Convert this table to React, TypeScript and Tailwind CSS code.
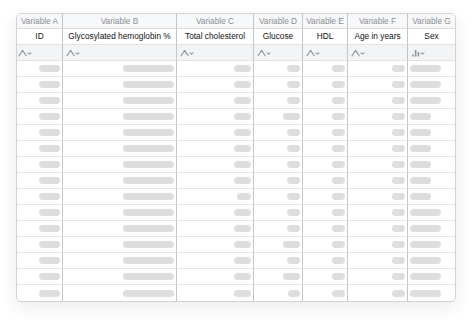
import React from "react";

type Col = {
  variable: string;
  name: string;
  chart: "dist" | "bars";
  align: "end" | "start";
  widths: number[];
};

const ROWS = 15;

const fill = (w: number) => Array.from({ length: ROWS }, () => w);

const COLUMNS: Col[] = [
  { variable: "Variable A", name: "ID", chart: "dist", align: "end", widths: fill(21) },
  { variable: "Variable B", name: "Glycosylated hemoglobin %", chart: "dist", align: "end", widths: fill(51) },
  {
    variable: "Variable C",
    name: "Total cholesterol",
    chart: "dist",
    align: "end",
    widths: fill(17).map((w, i) => (i === 8 ? 14 : w)),
  },
  {
    variable: "Variable D",
    name: "Glucose",
    chart: "dist",
    align: "end",
    widths: fill(13).map((w, i) => (i === 3 || i === 11 || i === 13 ? 17 : i === 14 ? 12 : w)),
  },
  { variable: "Variable E", name: "HDL", chart: "dist", align: "end", widths: fill(13) },
  { variable: "Variable F", name: "Age in years", chart: "dist", align: "end", widths: fill(13) },
  {
    variable: "Variable G",
    name: "Sex",
    chart: "bars",
    align: "start",
    widths: fill(31).map((w, i) => (i >= 3 && i <= 8 ? 21 : w)),
  },
];

const DistIcon = () => (
  <svg width="14" height="8" viewBox="0 0 14 8" fill="none" stroke="#8f959b" strokeWidth="1.1" strokeLinecap="round" strokeLinejoin="round">
    <path d="M1 6.8 L4.6 1.4 L8.2 6.8" />
    <path d="M10 3.8 L11.5 5.2 L13 3.8" />
  </svg>
);

const BarsIcon = () => (
  <svg width="14" height="8" viewBox="0 0 14 8" fill="none">
    <rect x="1" y="5.5" width="1.6" height="2" fill="#8f959b" />
    <rect x="3.8" y="1" width="1.6" height="6.5" fill="#8f959b" />
    <rect x="6.6" y="3" width="1.6" height="4.5" fill="#8f959b" />
    <path d="M10 3.8 L11.5 5.2 L13 3.8" stroke="#8f959b" strokeWidth="1.1" strokeLinecap="round" strokeLinejoin="round" />
  </svg>
);

export default function App() {
  return (
    <div className="min-h-screen bg-white pt-[13px] pl-[16px] font-['Liberation_Sans',Arial,sans-serif]">
      <div className="w-[440px] overflow-hidden rounded-[5px] border border-[#d2d3d5] bg-white shadow-[0_6px_18px_rgba(0,0,0,0.08)]">
        <div className="grid grid-cols-[46px_114px_77px_49px_45px_60px_47px]">
          {/* variable row */}
          {COLUMNS.map((col, c) => (
            <div
              key={`v-${c}`}
              className={`flex h-[15px] items-center justify-center border-b border-[#dadbde] bg-[#f7f8f9] text-[8.3px] leading-none text-[#8a8f95] ${
                c < COLUMNS.length - 1 ? "border-r border-r-[#c4c5c8]" : ""
              }`}
            >
              {col.variable}
            </div>
          ))}
          {/* name row */}
          {COLUMNS.map((col, c) => (
            <div
              key={`n-${c}`}
              className={`flex h-[16px] items-center justify-center whitespace-nowrap border-b border-[#e1e2e4] bg-white text-[8.3px] leading-none text-[#111214] ${
                c < COLUMNS.length - 1 ? "border-r border-r-[#c4c5c8]" : ""
              }`}
            >
              {col.name}
            </div>
          ))}
          {/* chart row */}
          {COLUMNS.map((col, c) => (
            <div
              key={`c-${c}`}
              className={`flex h-[16px] items-center border-b border-[#e1e2e4] bg-[#f3f4f5] ${
                c === 0 ? "pl-[1px]" : "pl-[3px]"
              } ${c < COLUMNS.length - 1 ? "border-r border-r-[#c4c5c8]" : ""}`}
            >
              {col.chart === "bars" ? <BarsIcon /> : <DistIcon />}
            </div>
          ))}
          {/* data rows */}
          {Array.from({ length: ROWS }).map((_, r) =>
            COLUMNS.map((col, c) => (
              <div
                key={`d-${r}-${c}`}
                className={`flex h-[16px] items-center ${
                  col.align === "end" ? "justify-end pr-[2px]" : "justify-start pl-[2px]"
                } ${r < ROWS - 1 ? "border-b border-[#e5e6e8]" : ""} ${
                  c < COLUMNS.length - 1 ? "border-r border-r-[#c4c5c8]" : ""
                }`}
              >
                <div
                  className="h-[7px] rounded-full bg-[#dedede]"
                  style={{ width: col.widths[r] }}
                />
              </div>
            ))
          )}
        </div>
      </div>
    </div>
  );
}
